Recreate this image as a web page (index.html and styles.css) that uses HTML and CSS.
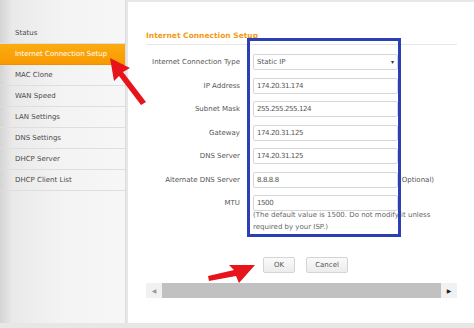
FILE: index.html
```html
<!DOCTYPE html>
<html>
<head>
    <title>Internet Connection Setup</title>
    <link rel="stylesheet" href="styles.css">
</head>
<body>
    <div class="page">
        <div class="sidebar">
            <ul class="menu">
                <li>Status</li>
                <li class="active">Internet Connection Setup</li>
                <li>MAC Clone</li>
                <li>WAN Speed</li>
                <li>LAN Settings</li>
                <li>DNS Settings</li>
                <li>DHCP Server</li>
                <li>DHCP Client List</li>
            </ul>
        </div>

        <div class="main">
            <h2 class="section_title">Internet Connection Setup</h2>

            <form class="setup_form">
                <div class="row">
                    <label>Internet Connection Type</label>
                    <div class="field select_box">Static IP <span class="caret">&#9662;</span></div>
                </div>
                <div class="row">
                    <label>IP Address</label>
                    <div class="field num">174.20.31.174</div>
                </div>
                <div class="row">
                    <label>Subnet Mask</label>
                    <div class="field num">255.255.255.124</div>
                </div>
                <div class="row">
                    <label>Gateway</label>
                    <div class="field num">174.20.31.125</div>
                </div>
                <div class="row">
                    <label>DNS Server</label>
                    <div class="field num">174.20.31.125</div>
                </div>
                <div class="row">
                    <label>Alternate DNS Server</label>
                    <div class="field num">8.8.8.8</div>
                    <span class="note">(Optional)</span>
                </div>
                <div class="row">
                    <label>MTU</label>
                    <div class="field num">1500</div>
                </div>
                <div class="hint">(The default value is 1500. Do not modify it unless required by your ISP.)</div>

                <div class="buttons">
                    <span class="btn btn_ok">OK</span>
                    <span class="btn">Cancel</span>
                </div>
            </form>

            <div class="scrollbar">
                <span class="arrow arrow_left">&#9664;</span>
                <span class="thumb"></span>
                <span class="arrow arrow_right">&#9654;</span>
            </div>

            <!-- highlight box drawn over the fields -->
            <div class="highlight"></div>
        </div>

        <!-- red pointer arrows -->
        <svg class="pointer pointer_menu" width="40" height="50" viewBox="0 0 40 50">
            <polygon points="2,2 22,12 15,16 38,46 33,49 11,20 6,25" fill="#e8141b"/>
        </svg>
        <svg class="pointer pointer_ok" width="50" height="22" viewBox="0 0 50 22">
            <polygon points="48,2 32,20 29,13 2,18 1,13 27,7 22,2" fill="#e8141b"/>
        </svg>
    </div>
</body>
</html>
```

FILE: styles.css
```css
body {
    margin: 0;
    padding: 0;
    background-color: #e7e7e7;
    font-family: 'DejaVu Sans', Verdana, sans-serif;
    font-size: 7px;
    color: #444;
}

.page {
    position: relative;
    display: flex;
    gap: 2px;
    width: 474px;
    height: 328px;
}

.sidebar {
    width: 125px;
    height: 323px;
    border-right: 1px solid #dcdcdc;
    background: linear-gradient(to right, #d4d4d4 0px, #e9e9e9 12px, #f3f3f3 60px, #f7f7f7 100%);
}

.menu {
    list-style: none;
    margin: 23px 0 0 0;
    padding: 0;
}

.menu li {
    height: 20px;
    line-height: 20px;
    padding-left: 15px;
    border-bottom: 1px solid #dedede;
    color: #4a4a4a;
}

.menu li.active {
    background: linear-gradient(#fcac10, #f79a00);
    color: #fff;
    border-bottom-color: #f08f00;
}

.main {
    position: relative;
    flex: 1;
    margin-top: 2px;
    height: 321px;
    background-color: #fff;
    padding: 0 17px 0 18px;
    box-sizing: border-box;
}

.section_title {
    margin: 0;
    padding-top: 29px;
    padding-bottom: 4px;
    font-size: 7.5px;
    font-weight: bold;
    color: #f39a11;
    border-bottom: 1px solid #e6e6e6;
    line-height: 9px;
}

.setup_form {
    margin: 9px 0 0 0;
}

.row {
    display: flex;
    align-items: center;
    height: 16px;
    margin-bottom: 7.5px;
}

.row label {
    width: 94px;
    margin-right: 13px;
    text-align: right;
    color: #555;
}

.field {
    width: 140px;
    height: 14px;
    line-height: 14px;
    padding-left: 3px;
    border: 1px solid #d6d6d6;
    border-radius: 2px;
    color: #555;
    flex-shrink: 0;
}

.num {
    letter-spacing: -0.4px;
}

.select_box {
    display: flex;
    justify-content: space-between;
    padding-right: 3px;
    width: 137px;
}

.caret {
    font-size: 6px;
    color: #333;
}

.note {
    margin-left: 1px;
    color: #555;
}

.hint {
    width: 182px;
    margin: -10px 0 0 107px;
    line-height: 12px;
    color: #666;
}

.buttons {
    display: flex;
    justify-content: center;
    gap: 11px;
    margin-top: 24px;
    padding-left: 8px;
}

.btn {
    height: 14px;
    line-height: 14px;
    padding: 0 8px;
    border: 1px solid #d4d4d4;
    border-radius: 2px;
    background: linear-gradient(#fafafa, #ececec);
    color: #555;
}

.btn_ok {
    padding: 0 10px;
}

.scrollbar {
    display: flex;
    align-items: center;
    height: 15px;
    margin-top: 10px;
    background-color: #f1f1f1;
}

.arrow {
    width: 16px;
    text-align: center;
    font-size: 6px;
    color: #999;
}

.arrow_right {
    color: #222;
}

.thumb {
    flex: 1;
    height: 15px;
    background-color: #c1c1c1;
}

.highlight {
    position: absolute;
    left: 119px;
    top: 36px;
    width: 148px;
    height: 193px;
    border: 3.5px solid #2c40b6;
}

.pointer {
    position: absolute;
}

.pointer_menu {
    left: 108px;
    top: 56px;
}

.pointer_ok {
    left: 207px;
    top: 263px;
}
```
